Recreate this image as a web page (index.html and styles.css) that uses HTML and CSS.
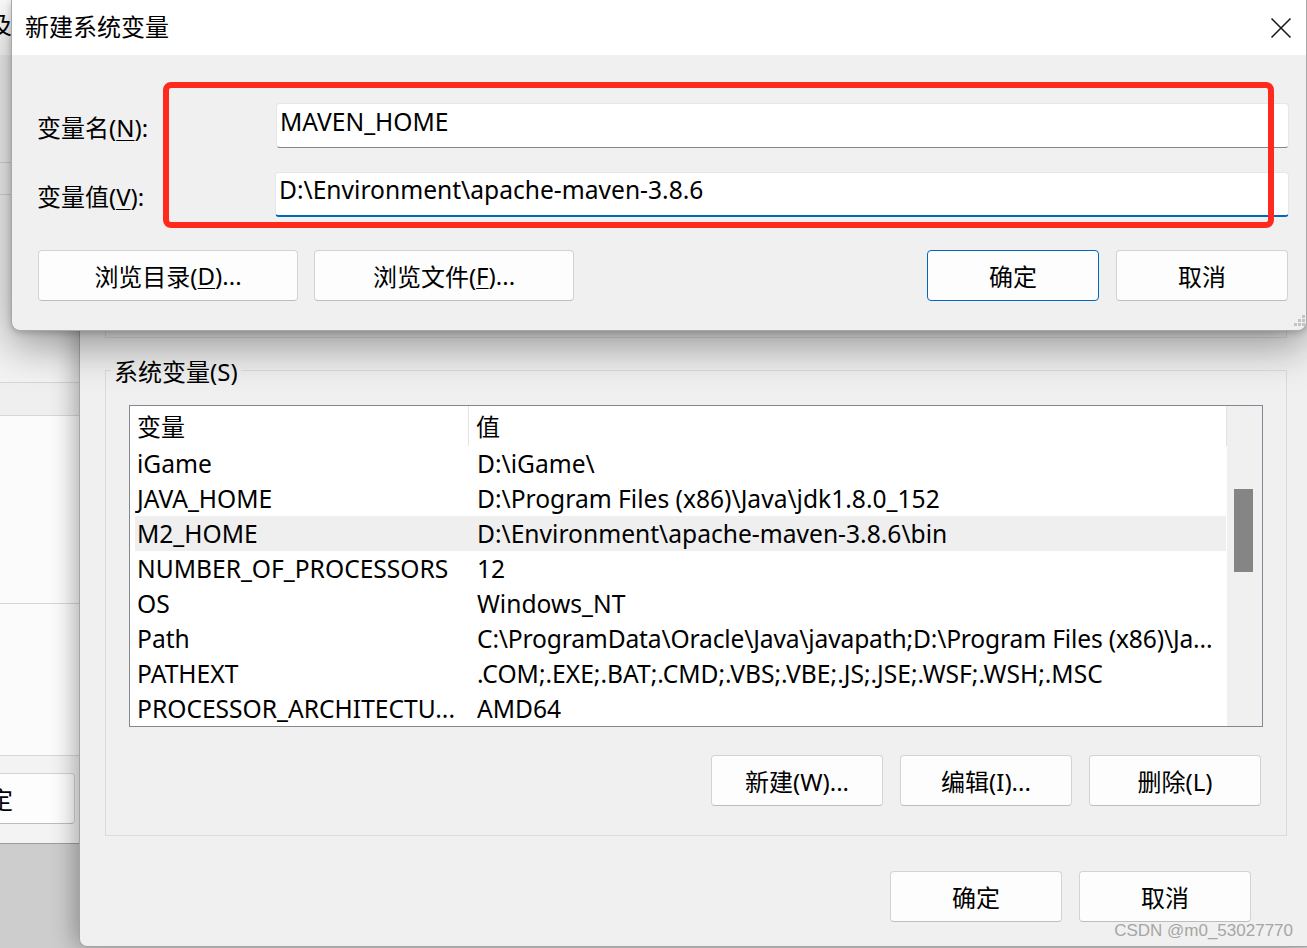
FILE: index.html
```html
<!DOCTYPE html>
<html lang="zh-CN">
<head>
<meta charset="utf-8">
<title>新建系统变量</title>
<link rel="stylesheet" href="styles.css">
</head>
<body>
<div class="desktop">

  <div class="bgwin">
    <div class="bg-title"><span>及</span></div>
    <div class="bg-sec s1"></div>
    <div class="bg-sec s2"></div>
    <div class="bg-sec s3"></div>
    <div class="bg-sec s4"></div>
    <div class="bg-sec s5"></div>
    <div class="bg-sec s6"></div>
    <div class="bg-actions"><div class="btn bg-btn">确定</div></div>
  </div>

  <div class="mainwin">
    <div class="prevgroup"></div>
    <div class="group">
      <div class="group-title">系统变量(S)</div>
      <div class="list">
        <div class="list-main">
          <div class="list-header">
            <div class="hcell">变量</div>
            <div class="hcell">值</div>
          </div>
          <div class="row"><div class="cell">iGame</div><div class="cell">D:\iGame\</div></div>
          <div class="row"><div class="cell">JAVA_HOME</div><div class="cell">D:\Program Files (x86)\Java\jdk1.8.0_152</div></div>
          <div class="row sel"><div class="cell">M2_HOME</div><div class="cell">D:\Environment\apache-maven-3.8.6\bin</div></div>
          <div class="row"><div class="cell">NUMBER_OF_PROCESSORS</div><div class="cell">12</div></div>
          <div class="row"><div class="cell">OS</div><div class="cell">Windows_NT</div></div>
          <div class="row"><div class="cell">Path</div><div class="cell tight">C:\ProgramData\Oracle\Java\javapath;D:\Program Files (x86)\Ja...</div></div>
          <div class="row"><div class="cell">PATHEXT</div><div class="cell">.COM;.EXE;.BAT;.CMD;.VBS;.VBE;.JS;.JSE;.WSF;.WSH;.MSC</div></div>
          <div class="row"><div class="cell">PROCESSOR_ARCHITECTU...</div><div class="cell">AMD64</div></div>
        </div>
        <div class="scrollbar"><div class="thumb"></div></div>
      </div>
      <div class="group-actions">
        <div class="btn">新建(W)...</div>
        <div class="btn">编辑(I)...</div>
        <div class="btn">删除(L)</div>
      </div>
    </div>
    <div class="footer">
      <div class="btn">确定</div>
      <div class="btn">取消</div>
    </div>
  </div>

  <div class="modal">
    <div class="titlebar">
      <span class="title">新建系统变量</span>
      <svg class="close" width="22" height="22" viewBox="0 0 22 22"><path d="M1.5 1.5 L20.5 20.5 M20.5 1.5 L1.5 20.5" stroke="#1b1b1b" stroke-width="1.6" fill="none"/></svg>
    </div>
    <div class="mbody">
      <div class="fields">
        <div class="flabel">变量名(<u>N</u>):</div>
        <div class="field">MAVEN_HOME</div>
        <div class="flabel">变量值(<u>V</u>):</div>
        <div class="field focus">D:\Environment\apache-maven-3.8.6</div>
      </div>
      <div class="mactions">
        <div class="btn wide">浏览目录(<u>D</u>)...</div>
        <div class="btn wide">浏览文件(<u>F</u>)...</div>
        <div class="spacer"></div>
        <div class="btn primary">确定</div>
        <div class="btn">取消</div>
      </div>
    </div>
    <div class="highlight"></div>
    <svg class="grip" width="14" height="14" viewBox="0 0 14 14">
      <rect x="10" y="2" width="3" height="3" fill="#c4c4c4"/>
      <rect x="6" y="6" width="3" height="3" fill="#c4c4c4"/>
      <rect x="10" y="6" width="3" height="3" fill="#c4c4c4"/>
      <rect x="2" y="10" width="3" height="3" fill="#c4c4c4"/>
      <rect x="6" y="10" width="3" height="3" fill="#c4c4c4"/>
      <rect x="10" y="10" width="3" height="3" fill="#c4c4c4"/>
    </svg>
  </div>

  <div class="watermark">CSDN @m0_53027770</div>
</div>
</body>
</html>
```

FILE: styles.css
```css
* { box-sizing: border-box; }
html, body { margin: 0; padding: 0; }
body {
  width: 1307px;
  height: 948px;
  overflow: hidden;
  font-family: "Noto Sans", "Noto Sans CJK SC", sans-serif;
  font-size: 24px;
  color: #000;
}
u { text-decoration-thickness: 1px; text-underline-offset: 3px; }

.desktop {
  position: relative;
  width: 1307px;
  height: 948px;
  overflow: hidden;
  background: #cdcdcd;
}

/* background window on the far left */
.bgwin {
  position: absolute;
  left: -100px;
  top: 0;
  width: 179px;
  height: 844px;
  background: #f3f3f3;
  border-bottom: 1px solid #9d9d9d;
  display: flex;
  flex-direction: column;
}
.bg-title {
  height: 55px;
  flex: none;
  background: #fff;
  padding-left: 88px;
  line-height: 50px;
}
.bg-sec { flex: none; border-bottom: 1px solid #d6d6d6; }
.s1 { height: 108px; }
.s2 { height: 32px; }
.s3 { height: 188px; }
.s4 { height: 33px; background: #efefef; }
.s5 { height: 188px; background: #fbfbfb; }
.s6 { height: 152px; background: #fbfbfb; }
.bg-actions { display: flex; justify-content: flex-end; padding: 17px 4px 0 0; }
.bg-btn { width: 175px; }

/* main environment variables window */
.mainwin {
  position: absolute;
  left: 79px;
  top: 0;
  width: 1228px;
  height: 947px;
  background: #f0f0f0;
  border-left: 1px solid #a4a4a4;
  border-bottom: 1px solid #a4a4a4;
  border-bottom-left-radius: 8px;
  box-shadow: -4px 0 24px rgba(0, 0, 0, 0.32);
  padding: 0 20px 0 25px;
  display: flex;
  flex-direction: column;
}
.prevgroup {
  height: 338px;
  flex: none;
  border: 1px solid #dcdcdc;
  border-top: none;
}
.group {
  position: relative;
  margin-top: 32px;
  border: 1px solid #dcdcdc;
  padding: 34px 23px 29px;
}
.group-title {
  position: absolute;
  left: 5px;
  top: -17px;
  padding: 0 3px;
  line-height: 36px;
  background: #f0f0f0;
  color: #000;
}
.list {
  height: 322px;
  border: 1px solid #828790;
  background: #fff;
  display: flex;
}
.list-main {
  flex: 1;
  min-width: 0;
  display: flex;
  flex-direction: column;
  overflow: hidden;
}
.list-header {
  height: 40px;
  flex: none;
  display: grid;
  grid-template-columns: 339px 1fr;
}
.hcell {
  border-right: 1px solid #e3e3e3;
  padding: 2px 0 0 7px;
  line-height: 38px;
  white-space: nowrap;
}
.row {
  height: 35px;
  flex: none;
  margin: 0 1px 0 5px;
  display: grid;
  grid-template-columns: 335px 1fr;
  align-items: center;
}
.row.sel { background: #efefef; }
.cell {
  font-size: 24.6px;
  white-space: nowrap;
  overflow: hidden;
  text-overflow: ellipsis;
  padding-left: 2px;
  line-height: 35px;
}
.cell + .cell { padding-left: 7px; padding-right: 0; text-overflow: clip; }
.cell.tight { letter-spacing: -0.16px; }
.scrollbar {
  width: 35px;
  flex: none;
  background: #f0f0f0;
}
.thumb {
  margin: 83px 0 0 7px;
  width: 19px;
  height: 83px;
  background: #858585;
}
.group-actions {
  display: flex;
  justify-content: flex-end;
  gap: 17px;
  margin-top: 28px;
  padding-right: 2px;
}
.footer {
  display: flex;
  justify-content: flex-end;
  gap: 17px;
  margin-top: 35px;
  padding-right: 36px;
}

.btn {
  width: 172px;
  height: 51px;
  flex: none;
  border: 1px solid #d3d3d3;
  border-bottom-color: #bdbdbd;
  border-radius: 4px;
  background: #fdfdfd;
  display: flex;
  align-items: center;
  justify-content: center;
  white-space: nowrap;
  color: #000;
}
.btn.wide { width: 260px; }
.btn.primary { border: 1px solid #0067c0; }

/* modal dialog */
.modal {
  position: absolute;
  left: 11px;
  top: 0;
  width: 1296px;
  height: 331px;
  background: #f0f0f0;
  border: 1px solid #a8a8a8;
  border-top: none;
  border-radius: 0 0 9px 9px;
  box-shadow: 0 14px 44px rgba(0, 0, 0, 0.40), 0 2px 6px rgba(0, 0, 0, 0.18);
  display: flex;
  flex-direction: column;
}
.titlebar {
  height: 55px;
  flex: none;
  background: #fff;
  display: flex;
  align-items: center;
  justify-content: space-between;
  padding: 0 14px 0 13px;
}
.title { line-height: 30px; margin-top: -2px; }
.close { display: block; }
.mbody {
  flex: 1;
  padding: 48px 17px 0 25px;
}
.fields {
  display: grid;
  grid-template-columns: 239px 1fr;
  row-gap: 24px;
  align-items: center;
}
.flabel { white-space: nowrap; padding-top: 2px; }
.field {
  height: 45px;
  font-size: 24.6px;
  background: #fff;
  border: 1px solid #e6e6e6;
  border-bottom: 1px solid #868686;
  border-radius: 4px;
  padding: 0 3px 9px;
  display: flex;
  align-items: center;
  white-space: nowrap;
}
.field.focus { border-bottom: 2px solid #0067c0; margin-left: -1px; }
.mactions {
  display: flex;
  gap: 16px;
  margin-top: 33px;
  padding: 0 1px;
}
.mactions .spacer { flex: 1; }
.mactions .primary + .btn { margin-left: 1px; }

.highlight {
  position: absolute;
  left: 151px;
  top: 82px;
  width: 1111px;
  height: 146px;
  border: 6px solid #ff2a1c;
  border-radius: 8px;
}
.grip {
  position: absolute;
  right: 0;
  bottom: 3px;
}

.watermark {
  position: absolute;
  right: 14px;
  bottom: 7px;
  font-family: "Liberation Sans", sans-serif;
  font-size: 17px;
  color: #a6a6a6;
}
```
